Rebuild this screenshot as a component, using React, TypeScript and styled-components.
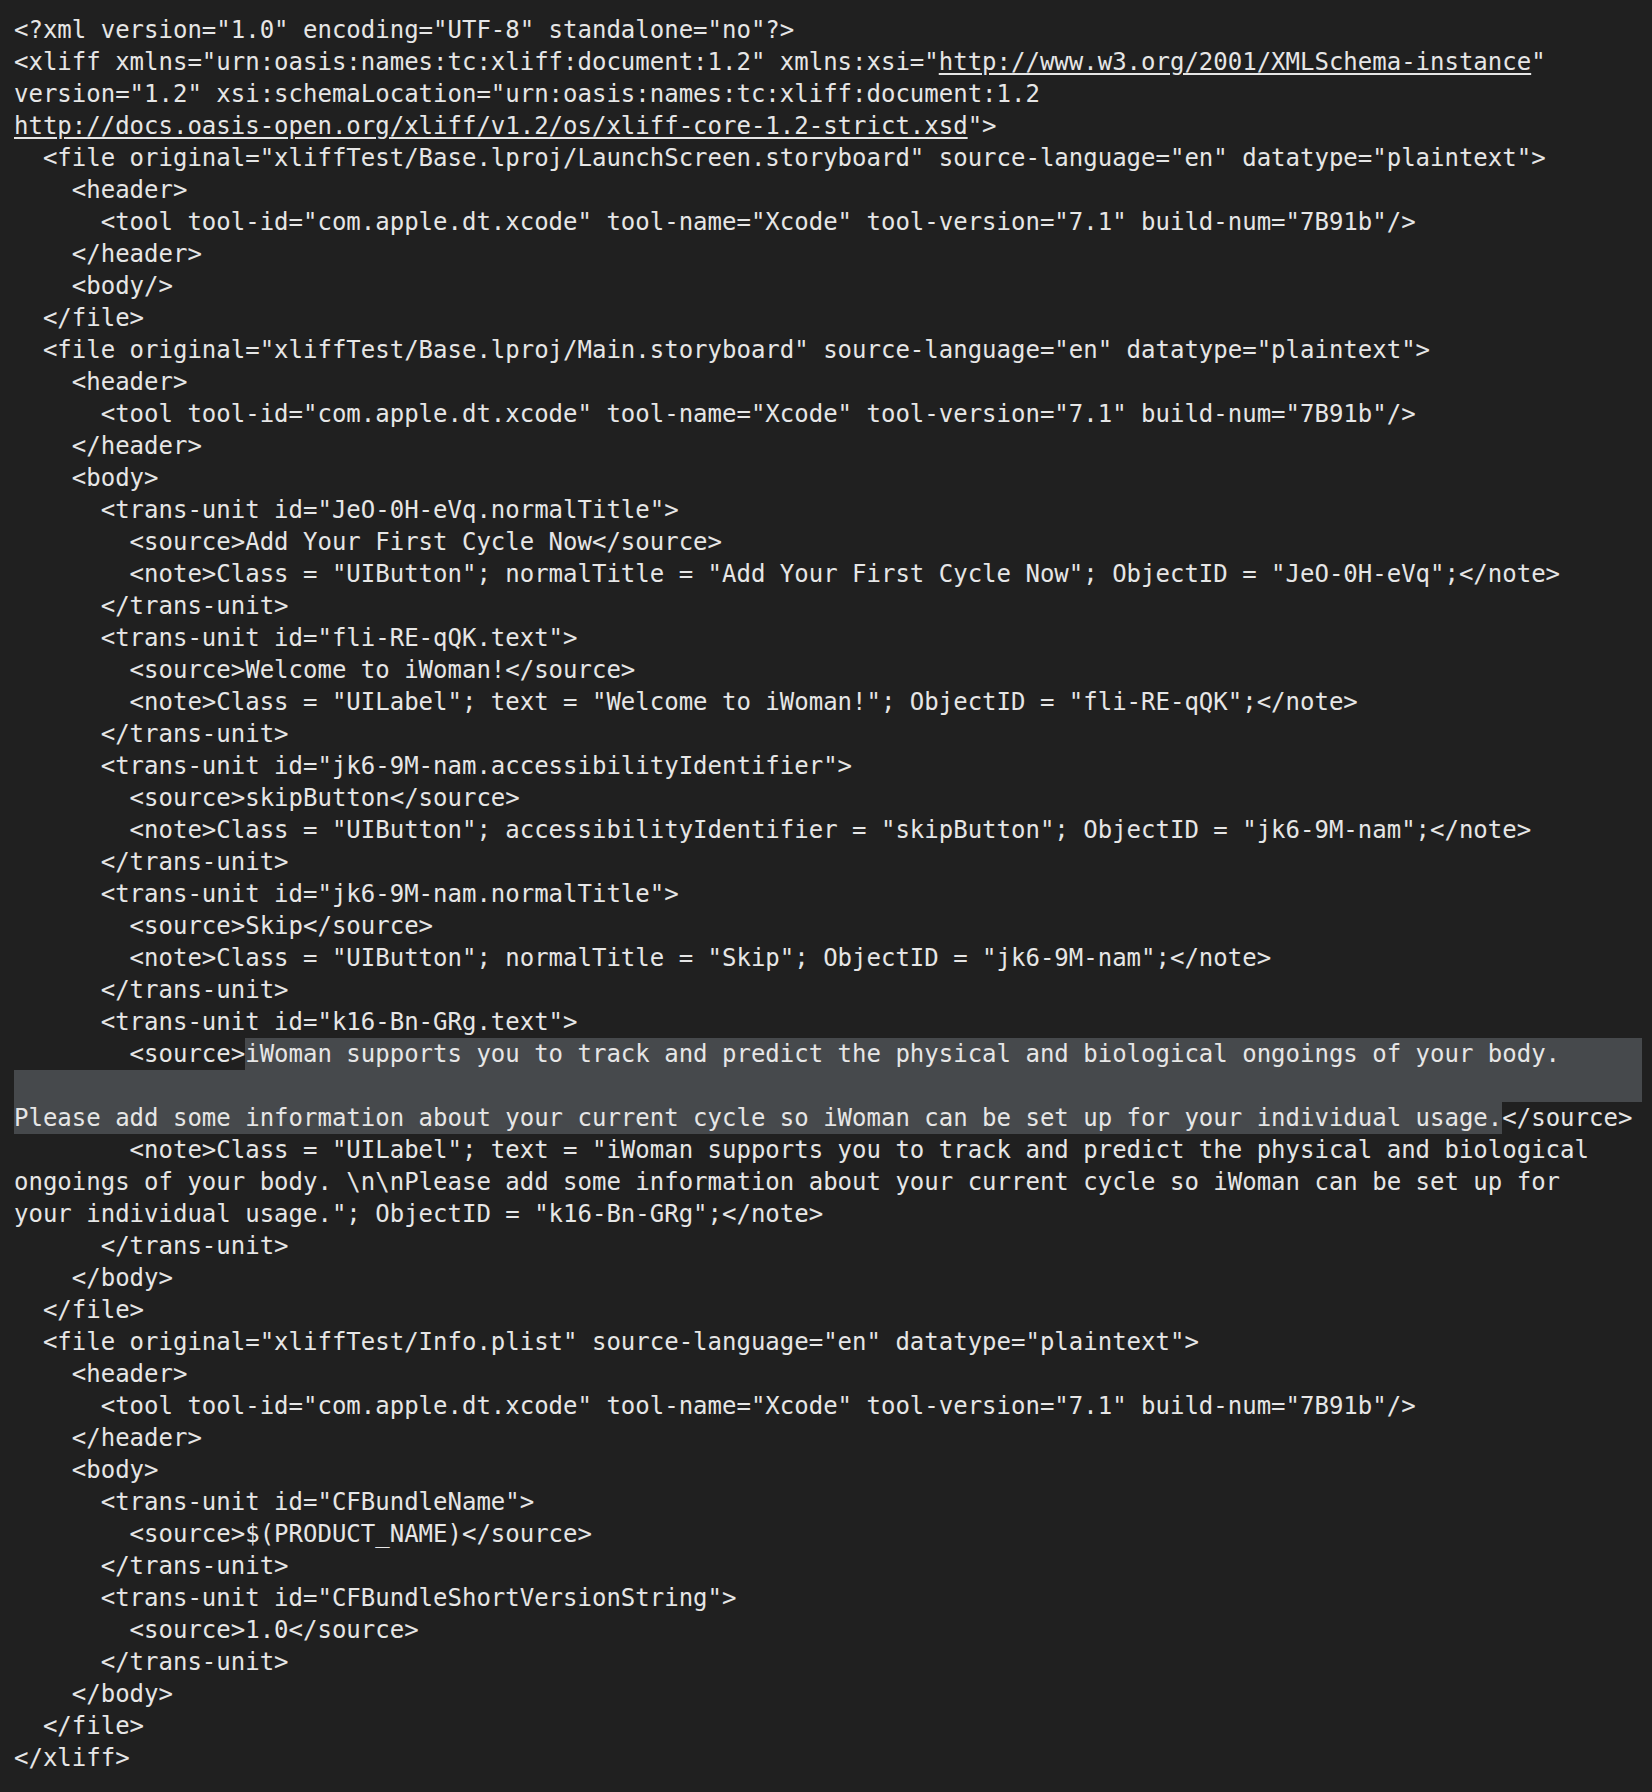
import React from 'react';
import styled, { createGlobalStyle } from 'styled-components';

const GlobalStyle = createGlobalStyle`
  html, body {
    margin: 0;
    padding: 0;
    background: #202020;
  }
`;

const Editor = styled.div`
  min-height: 1792px;
  box-sizing: border-box;
  padding: 14px 10px 0 14px;
  background: #202020;
  color: #e6e6e6;
  font-family: 'DejaVu Sans Mono', 'Liberation Mono', monospace;
  font-size: 24px;
  line-height: 32px;
`;

const Line = styled.div<{ $selected?: boolean }>`
  display: flex;
  height: 32px;
  white-space: pre;
  background: ${(props) => (props.$selected ? '#46494c' : 'transparent')};
`;

const Url = styled.span`
  text-decoration: underline;
  text-underline-offset: 3px;
`;

const Selection = styled.span<{ $toEnd?: boolean }>`
  background: #46494c;
  flex: ${(props) => (props.$toEnd ? '1' : '0 0 auto')};
`;

type Segment = string | { url: string } | { sel: string; toEnd?: boolean };
type CodeLine = { parts: Segment[]; selected?: boolean };

const tool =
  '      <tool tool-id="com.apple.dt.xcode" tool-name="Xcode" tool-version="7.1" build-num="7B91b"/>';

const lines: CodeLine[] = [
  { parts: ['<?xml version="1.0" encoding="UTF-8" standalone="no"?>'] },
  {
    parts: [
      '<xliff xmlns="urn:oasis:names:tc:xliff:document:1.2" xmlns:xsi="',
      { url: 'http://www.w3.org/2001/XMLSchema-instance' },
      '"',
    ],
  },
  { parts: ['version="1.2" xsi:schemaLocation="urn:oasis:names:tc:xliff:document:1.2'] },
  { parts: [{ url: 'http://docs.oasis-open.org/xliff/v1.2/os/xliff-core-1.2-strict.xsd' }, '">'] },
  { parts: ['  <file original="xliffTest/Base.lproj/LaunchScreen.storyboard" source-language="en" datatype="plaintext">'] },
  { parts: ['    <header>'] },
  { parts: [tool] },
  { parts: ['    </header>'] },
  { parts: ['    <body/>'] },
  { parts: ['  </file>'] },
  { parts: ['  <file original="xliffTest/Base.lproj/Main.storyboard" source-language="en" datatype="plaintext">'] },
  { parts: ['    <header>'] },
  { parts: [tool] },
  { parts: ['    </header>'] },
  { parts: ['    <body>'] },
  { parts: ['      <trans-unit id="JeO-0H-eVq.normalTitle">'] },
  { parts: ['        <source>Add Your First Cycle Now</source>'] },
  { parts: ['        <note>Class = "UIButton"; normalTitle = "Add Your First Cycle Now"; ObjectID = "JeO-0H-eVq";</note>'] },
  { parts: ['      </trans-unit>'] },
  { parts: ['      <trans-unit id="fli-RE-qQK.text">'] },
  { parts: ['        <source>Welcome to iWoman!</source>'] },
  { parts: ['        <note>Class = "UILabel"; text = "Welcome to iWoman!"; ObjectID = "fli-RE-qQK";</note>'] },
  { parts: ['      </trans-unit>'] },
  { parts: ['      <trans-unit id="jk6-9M-nam.accessibilityIdentifier">'] },
  { parts: ['        <source>skipButton</source>'] },
  { parts: ['        <note>Class = "UIButton"; accessibilityIdentifier = "skipButton"; ObjectID = "jk6-9M-nam";</note>'] },
  { parts: ['      </trans-unit>'] },
  { parts: ['      <trans-unit id="jk6-9M-nam.normalTitle">'] },
  { parts: ['        <source>Skip</source>'] },
  { parts: ['        <note>Class = "UIButton"; normalTitle = "Skip"; ObjectID = "jk6-9M-nam";</note>'] },
  { parts: ['      </trans-unit>'] },
  { parts: ['      <trans-unit id="k16-Bn-GRg.text">'] },
  {
    parts: [
      '        <source>',
      {
        sel: 'iWoman supports you to track and predict the physical and biological ongoings of your body.',
        toEnd: true,
      },
    ],
  },
  { parts: [''], selected: true },
  {
    parts: [
      {
        sel: 'Please add some information about your current cycle so iWoman can be set up for your individual usage.',
      },
      '</source>',
    ],
  },
  { parts: ['        <note>Class = "UILabel"; text = "iWoman supports you to track and predict the physical and biological'] },
  { parts: ['ongoings of your body. \\n\\nPlease add some information about your current cycle so iWoman can be set up for'] },
  { parts: ['your individual usage."; ObjectID = "k16-Bn-GRg";</note>'] },
  { parts: ['      </trans-unit>'] },
  { parts: ['    </body>'] },
  { parts: ['  </file>'] },
  { parts: ['  <file original="xliffTest/Info.plist" source-language="en" datatype="plaintext">'] },
  { parts: ['    <header>'] },
  { parts: [tool] },
  { parts: ['    </header>'] },
  { parts: ['    <body>'] },
  { parts: ['      <trans-unit id="CFBundleName">'] },
  { parts: ['        <source>$(PRODUCT_NAME)</source>'] },
  { parts: ['      </trans-unit>'] },
  { parts: ['      <trans-unit id="CFBundleShortVersionString">'] },
  { parts: ['        <source>1.0</source>'] },
  { parts: ['      </trans-unit>'] },
  { parts: ['    </body>'] },
  { parts: ['  </file>'] },
  { parts: ['</xliff>'] },
];

const renderPart = (part: Segment, key: number) => {
  if (typeof part === 'string') return <span key={key}>{part}</span>;
  if ('url' in part) return <Url key={key}>{part.url}</Url>;
  return (
    <Selection key={key} $toEnd={part.toEnd}>
      {part.sel}
    </Selection>
  );
};

export default function App() {
  return (
    <>
      <GlobalStyle />
      <Editor>
        {lines.map((line, i) => (
          <Line key={i} $selected={line.selected}>
            {line.parts.map(renderPart)}
          </Line>
        ))}
      </Editor>
    </>
  );
}
